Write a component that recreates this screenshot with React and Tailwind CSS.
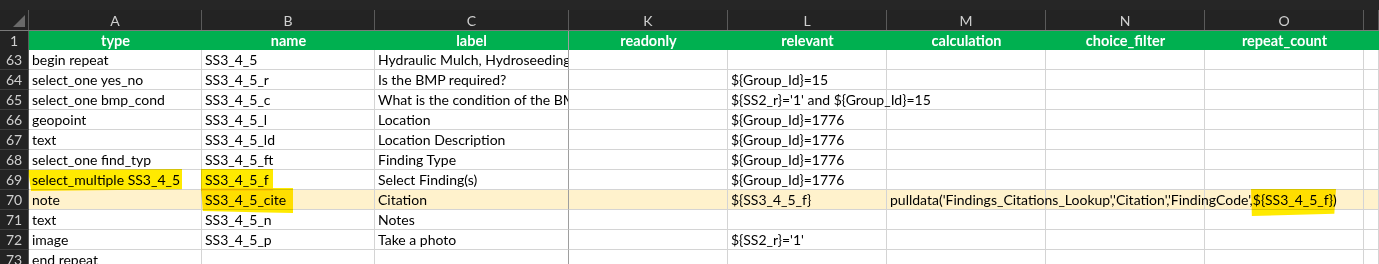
const colW = [
  "w-[173px]",
  "w-[173px]",
  "w-[194px]",
  "w-[159px]",
  "w-[159px]",
  "w-[159px]",
  "w-[159px]",
  "w-[159px]",
  "w-[15px]",
]

const letters = ["A", "B", "C", "K", "L", "M", "N", "O", ""]
const headers = ["type", "name", "label", "readonly", "relevant", "calculation", "choice_filter", "repeat_count", ""]

const rows = [
  { n: 63, cells: ["begin repeat", "SS3_4_5", "Hydraulic Mulch, Hydroseeding"] },
  { n: 64, cells: ["select_one yes_no", "SS3_4_5_r", "Is the BMP required?", "", "${Group_Id}=15"] },
  { n: 65, cells: ["select_one bmp_cond", "SS3_4_5_c", "What is the condition of the BMP?", "", "${SS2_r}='1' and ${Group_Id}=15"] },
  { n: 66, cells: ["geopoint", "SS3_4_5_l", "Location", "", "${Group_Id}=1776"] },
  { n: 67, cells: ["text", "SS3_4_5_ld", "Location Description", "", "${Group_Id}=1776"] },
  { n: 68, cells: ["select_one find_typ", "SS3_4_5_ft", "Finding Type", "", "${Group_Id}=1776"] },
  { n: 69, cells: ["select_multiple SS3_4_5", "SS3_4_5_f", "Select Finding(s)", "", "${Group_Id}=1776"] },
  {
    n: 70,
    tint: true,
    cells: ["note", "SS3_4_5_cite", "Citation", "", "${SS3_4_5_f}", "pulldata('Findings_Citations_Lookup','Citation','FindingCode',${SS3_4_5_f})"],
  },
  { n: 71, cells: ["text", "SS3_4_5_n", "Notes"] },
  { n: 72, cells: ["image", "SS3_4_5_p", "Take a photo", "", "${SS2_r}='1'"] },
  { n: 73, cells: ["end repeat"] },
]

// highlighter strokes, keyed by row number + column index
const marks = {
  "69-0": "left-[-1px] top-[-1px] w-[154px] h-[22px] [clip-path:polygon(0_4%,100%_0,100%_92%,2%_100%)]",
  "69-1": "left-[-1px] top-[-1px] w-[72px] h-[22px]",
  "70-1": "left-[-1px] top-[-2px] w-[92px] h-[25px] [clip-path:polygon(0_0,100%_0,100%_100%,2%_92%)]",
  "70-5": "left-[364px] top-[-1px] w-[85px] h-[27px] [clip-path:polygon(0_0,100%_0,98%_92%,1%_100%)]",
}

function Cell({ row, i, text }) {
  const mark = marks[`${row.n}-${i}`]
  const divider = i === 2 ? "border-r-[#9e9e9e]" : "border-r-[#d4d4d4]"
  return (
    <div
      className={`relative h-5 shrink-0 border-b border-r border-b-[#d4d4d4] ${divider} ${colW[i]} ${
        i === 2 ? "overflow-hidden" : ""
      }`}
    >
      {text && (
        <span className="relative z-10 block whitespace-nowrap pl-[3px] leading-[20px] text-black">{text}</span>
      )}
      {mark && <span className={`absolute z-20 bg-[#ffea00] mix-blend-multiply ${mark}`} />}
    </div>
  )
}

export default function App() {
  return (
    <div className="h-[264px] w-[1379px] overflow-hidden bg-white font-['Lato',sans-serif] text-[14px]">
      <div className="h-[10px] bg-[#262626]" />

      <div className="flex h-5 bg-[#232323] text-[14px] text-[#cfcfcf]">
        <div className="relative w-[29px] shrink-0 border-r border-[#5a5a5a]">
          <div className="absolute bottom-[3px] right-[3px] h-0 w-0 border-b-[12px] border-l-[12px] border-b-[#6a6a6a] border-l-transparent" />
        </div>
        {letters.map((l, i) => (
          <div
            key={i}
            className={`flex shrink-0 items-center justify-center border-r border-[#5a5a5a] ${colW[i]}`}
          >
            {l}
          </div>
        ))}
      </div>

      <div className="flex h-5 border-t border-[#7a7a7a] bg-[#00b050] text-[14.5px]">
        <div className="flex w-[29px] shrink-0 items-center justify-center border-r border-[#5a5a5a] bg-[#232323] text-[14px] text-[#cfcfcf]">
          1
        </div>
        {headers.map((h, i) => (
          <div
            key={i}
            className={`flex shrink-0 items-center justify-center font-bold text-white ${colW[i]} ${
              i === 2 ? "border-r border-[#9e9e9e]" : ""
            }`}
          >
            {h}
          </div>
        ))}
      </div>

      {rows.map((row) => (
        <div key={row.n} className={`flex h-5 ${row.tint ? "bg-[#fff2cc]" : ""}`}>
          <div className="flex h-5 w-[29px] shrink-0 items-center justify-center border-b border-r border-b-[#3c3c3c] border-r-[#5a5a5a] bg-[#232323] text-[#cfcfcf]">
            {row.n}
          </div>
          {colW.map((_, i) => (
            <Cell key={i} row={row} i={i} text={row.cells[i]} />
          ))}
        </div>
      ))}
    </div>
  )
}
